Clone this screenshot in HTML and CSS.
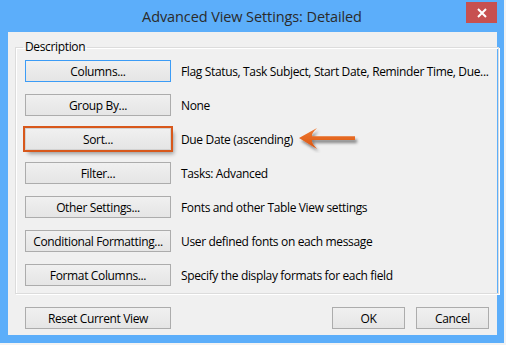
FILE: index.html
```html
<!DOCTYPE html>
<html lang="en">
<head>
    <meta charset="UTF-8">
    <title>Advanced View Settings: Detailed</title>
    <link rel="stylesheet" href="styles.css">
</head>
<body>

    <div class="window">
        <div class="titlebar">
            <span></span>
            <h1>Advanced View Settings: Detailed</h1>
            <button class="close" title="Close">
                <svg width="10" height="10" viewBox="0 0 10 10">
                    <path d="M1 1 L9 9 M9 1 L1 9" stroke="#fff" stroke-width="2"/>
                </svg>
            </button>
        </div>

        <div class="client">
            <fieldset class="group">
                <legend>Description</legend>

                <div class="row">
                    <button class="btn focused">Columns...</button>
                    <span>Flag Status, Task Subject, Start Date, Reminder Time, Due...</span>
                </div>
                <div class="row">
                    <button class="btn">Group By...</button>
                    <span>None</span>
                </div>
                <div class="row">
                    <button class="btn marked">Sort...</button>
                    <span>Due Date (ascending)</span>
                    <svg class="arrow" width="64" height="26" viewBox="0 0 64 26">
                        <defs>
                            <linearGradient id="orange" x1="0" y1="0" x2="0" y2="1">
                                <stop offset="0" stop-color="#f07a32"/>
                                <stop offset="1" stop-color="#d9540f"/>
                            </linearGradient>
                            <filter id="shade" x="-20%" y="-40%" width="150%" height="200%">
                                <feDropShadow dx="2" dy="3" stdDeviation="1.6" flood-color="#000" flood-opacity="0.45"/>
                            </filter>
                        </defs>
                        <path d="M1 11 L19 1 Q13 7 14 9.2 L57 9.2 L57 13 L14 13 Q13 15.5 19 22 Z" fill="url(#orange)" filter="url(#shade)"/>
                    </svg>
                </div>
                <div class="row">
                    <button class="btn">Filter...</button>
                    <span>Tasks: Advanced</span>
                </div>
                <div class="row">
                    <button class="btn">Other Settings...</button>
                    <span>Fonts and other Table View settings</span>
                </div>
                <div class="row">
                    <button class="btn">Conditional Formatting...</button>
                    <span>User defined fonts on each message</span>
                </div>
                <div class="row">
                    <button class="btn">Format Columns...</button>
                    <span>Specify the display formats for each field</span>
                </div>
            </fieldset>

            <div class="actions">
                <button class="btn">Reset Current View</button>
                <div class="spacer"></div>
                <button class="btn small">OK</button>
                <button class="btn small">Cancel</button>
            </div>
        </div>
    </div>

</body>
</html>
```

FILE: styles.css
```css
* {
    margin: 0;
    padding: 0;
    box-sizing: border-box;
}

body {
    font-family: 'Open Sans', 'Noto Sans', sans-serif;
    font-size: 12px;
    letter-spacing: -0.35px;
    color: #000;
    background-color: #f3f3f3;
    width: 506px;
    height: 345px;
}

.window {
    width: 504px;
    height: 343px;
    background-color: #5caefa;
    display: flex;
    flex-direction: column;
    padding: 0 7px 8px 8px;
}

.titlebar {
    height: 32px;
    display: grid;
    grid-template-columns: 1fr auto 1fr;
    align-items: start;
    margin: 0 -7px 0 -8px;
}

.titlebar h1 {
    font-weight: normal;
    font-size: 14.5px;
    letter-spacing: -0.1px;
    color: #2b2b2b;
    line-height: 20px;
    padding-top: 7px;
}

.close {
    justify-self: end;
    margin: 2px 7px 0 0;
    width: 31px;
    height: 21px;
    border: none;
    background-color: #c75050;
    display: flex;
    align-items: center;
    justify-content: center;
}

.client {
    flex: 1;
    background-color: #f0f0f0;
    padding: 7px 8px 0 7px;
    display: flex;
    flex-direction: column;
}

.group {
    border: 1px solid #dcdcdc;
    box-shadow: inset 1px 1px 0 #fff, 1px 1px 0 #fff;
    padding: 5px 9px 7px 9px;
}

.group legend {
    padding: 0 2px;
    margin-left: -2px;
    line-height: 16px;
}

.row {
    display: flex;
    align-items: center;
    height: 22px;
    margin-bottom: 12px;
    white-space: nowrap;
}

.row:last-child {
    margin-bottom: 0;
}

.row span {
    margin-left: 10px;
}

.btn {
    font-family: inherit;
    font-size: 12px;
    letter-spacing: -0.35px;
    color: #000;
    width: 146px;
    height: 22px;
    flex-shrink: 0;
    border: 1px solid #acacac;
    background: linear-gradient(#f0f0f0, #e5e5e5);
}

.btn.focused {
    border-color: #3c9cf6;
}

.btn.marked {
    border-color: #d2d2d2;
    box-shadow: 0 0 0 2px #d8581b, 3px 4px 4px rgba(0, 0, 0, 0.35);
}

.arrow {
    margin: 2px 0 0 5px;
}

.actions {
    display: flex;
    margin-top: 13px;
    padding-left: 10px;
}

.spacer {
    flex: 1;
}

.btn.small {
    width: 73px;
    margin-left: 11px;
}
```
